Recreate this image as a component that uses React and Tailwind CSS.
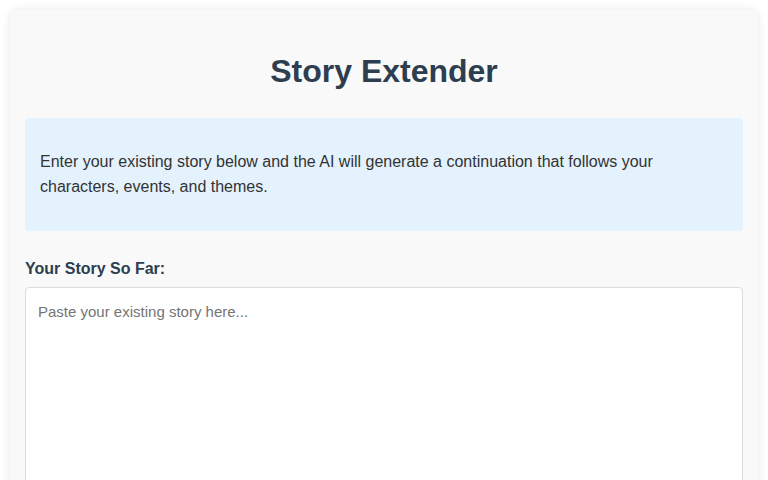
export default function App() {
  return (
    <div className="min-h-screen bg-white p-[10px]" style={{ fontFamily: '"Liberation Sans", Arial, sans-serif' }}>
      <div className="rounded-lg bg-[#f9f9f9] px-[15px] pt-[43px] pb-[20px] shadow-[0_0_10px_rgba(0,0,0,0.1)]">
        <h1 className="text-center text-[32px] font-bold leading-[37px] text-[#2c3e50]">Story Extender</h1>
        <div className="mt-[28px] rounded bg-[#e3f2fd] px-[15px] pt-[31px] pb-[32px]">
          <p className="text-[16px] leading-[25px] text-[#333]">
            Enter your existing story below and the AI will generate a continuation that follows your characters, events, and themes.
          </p>
        </div>
        <label className="mt-[29px] mb-[9px] block text-[16px] font-bold leading-[18px] text-[#2c3e50]">Your Story So Far:</label>
        <textarea
          className="block h-[300px] w-full resize-y rounded border border-[#ddd] bg-white px-[12px] pt-[14px] pb-[12px] text-[15px] leading-[20px] text-[#333] placeholder:text-[#757575] focus:outline-none"
          placeholder="Paste your existing story here..."
        />
      </div>
    </div>
  );
}
